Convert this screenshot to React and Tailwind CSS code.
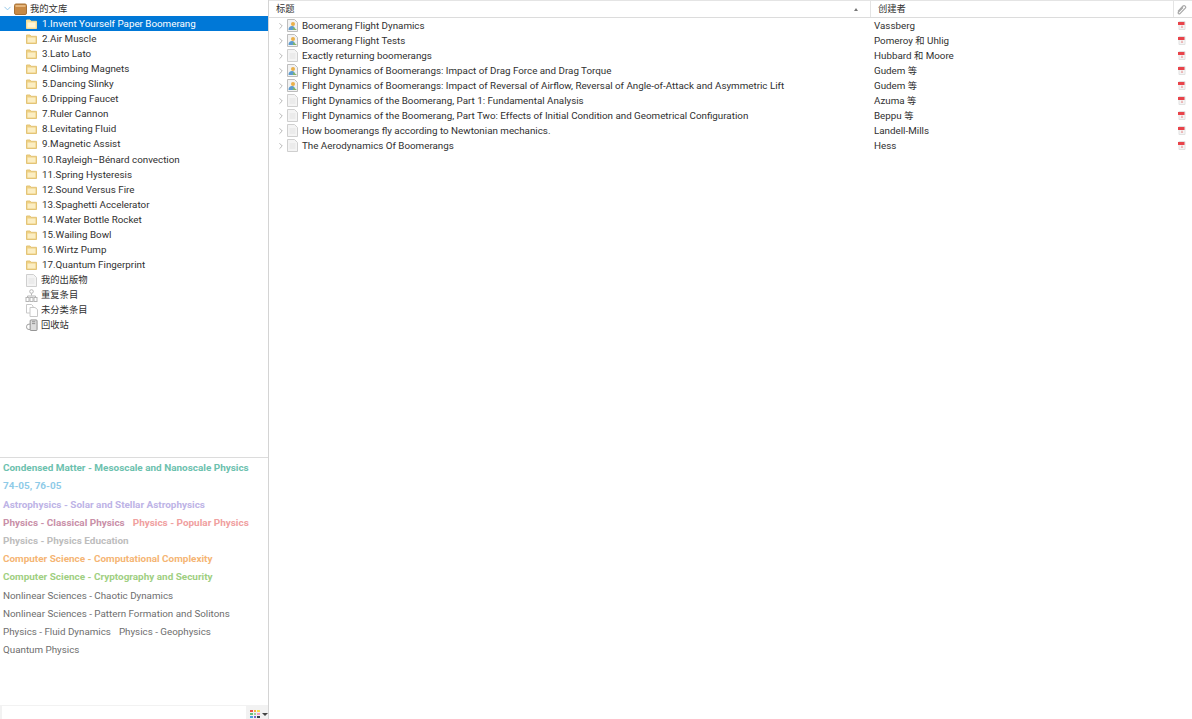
import React from 'react';
import { ChevronDown, ChevronRight } from 'lucide-react';

const FONT = "font-['Roboto','Noto_Sans_CJK_SC',sans-serif]";
const CJK = "font-['Noto_Sans_CJK_SC',sans-serif] text-[9.300px]";

const collections = [
  '1.Invent Yourself Paper Boomerang', '2.Air Muscle', '3.Lato Lato', '4.Climbing Magnets', '5.Dancing Slinky',
  '6.Dripping Faucet', '7.Ruler Cannon', '8.Levitating Fluid', '9.Magnetic Assist', '10.Rayleigh–Bénard convection',
  '11.Spring Hysteresis', '12.Sound Versus Fire', '13.Spaghetti Accelerator', '14.Water Bottle Rocket',
  '15.Wailing Bowl', '16.Wirtz Pump', '17.Quantum Fingerprint',
];

const items = [
  { title: 'Boomerang Flight Dynamics', creator: 'Vassberg', icon: 'person' },
  { title: 'Boomerang Flight Tests', creator: 'Pomeroy 和 Uhlig', icon: 'person' },
  { title: 'Exactly returning boomerangs', creator: 'Hubbard 和 Moore', icon: 'doc' },
  { title: 'Flight Dynamics of Boomerangs: Impact of Drag Force and Drag Torque', creator: 'Gudem 等', icon: 'person' },
  { title: 'Flight Dynamics of Boomerangs: Impact of Reversal of Airflow, Reversal of Angle-of-Attack and Asymmetric Lift', creator: 'Gudem 等', icon: 'person' },
  { title: 'Flight Dynamics of the Boomerang, Part 1: Fundamental Analysis', creator: 'Azuma 等', icon: 'doc' },
  { title: 'Flight Dynamics of the Boomerang, Part Two: Effects of Initial Condition and Geometrical Configuration', creator: 'Beppu 等', icon: 'doc' },
  { title: 'How boomerangs fly according to Newtonian mechanics.', creator: 'Landell-Mills', icon: 'doc' },
  { title: 'The Aerodynamics Of Boomerangs', creator: 'Hess', icon: 'doc' },
];

const tags = [
  [['Condensed Matter - Mesoscale and Nanoscale Physics', 'text-[#6cc1ae]']],
  [['74-05, 76-05', 'text-[#8fcbe8]']],
  [['Astrophysics - Solar and Stellar Astrophysics', 'text-[#bdb3e6]']],
  [['Physics - Classical Physics', 'text-[#c98fa8]'], ['Physics - Popular Physics', 'text-[#f0a0a0]']],
  [['Physics - Physics Education', 'text-[#bdbdbd]']],
  [['Computer Science - Computational Complexity', 'text-[#f5b574]']],
  [['Computer Science - Cryptography and Security', 'text-[#a0cf82]']],
];

const plainTags = [
  ['Nonlinear Sciences - Chaotic Dynamics'],
  ['Nonlinear Sciences - Pattern Formation and Solitons'],
  ['Physics - Fluid Dynamics', 'Physics - Geophysics'],
  ['Quantum Physics'],
];

const FolderIcon = ({ selected }) => (
  <svg width="11" height="10" viewBox="0 0 11 10" className="shrink-0">
    <path d="M0.500 1h3.500l1 1.300h5.500v7.200h-10z" fill={selected ? '#f8e3a0' : '#efd083'} stroke={selected ? '#f6dc96' : '#e3c477'} />
    <rect x="1.500" y="3.500" width="8" height="5" fill={selected ? '#fff6d6' : '#fbeec4'} />
  </svg>
);

const LibraryIcon = () => (
  <svg width="13" height="12" viewBox="0 0 13 12" className="shrink-0">
    <rect x="0.500" y="1" width="12" height="10.500" rx="1.500" fill="#c98a45" stroke="#a87236" />
    <rect x="1.500" y="2" width="10" height="2" fill="#e6b67c" />
  </svg>
);

const DocIcon = () => (
  <svg width="11" height="13" viewBox="0 0 11 13" className="shrink-0">
    <path d="M0.500 0.500h7l3 3v9h-10z" fill="#f4f4f4" stroke="#cfcfcf" />
    <path d="M2.500 5h6M2.500 7h6M2.500 9h6" stroke="#e2e2e2" />
  </svg>
);

const PersonDocIcon = () => (
  <svg width="11" height="13" viewBox="0 0 11 13" className="shrink-0">
    <path d="M0.500 0.500h7l3 3v9h-10z" fill="#f2f2f2" stroke="#bdbdbd" />
    <circle cx="6" cy="5" r="2" fill="#eab04a" />
    <path d="M1.500 11c0-3 1.500-4 3.500-4s3 1 3 4z" fill="#5d9bd0" />
    <path d="M6 8l4 3H6z" fill="#7fb56c" />
  </svg>
);

const DuplicateIcon = () => (
  <svg width="13" height="13" viewBox="0 0 13 13" className="shrink-0" fill="#fff" stroke="#b5b5b5">
    <circle cx="6.500" cy="2.500" r="1.800" />
    <path d="M6.500 4.500v2M2.500 8.500v-1.500h8v1.500" />
    <rect x="1" y="8.500" width="3" height="4" />
    <rect x="5" y="8.500" width="3" height="4" />
    <rect x="9" y="8.500" width="3" height="4" />
  </svg>
);

const UnfiledIcon = () => (
  <svg width="12" height="13" viewBox="0 0 12 13" className="shrink-0" fill="#fff" stroke="#c8c8c8">
    <path d="M0.500 0.500h5l1.500 1.500v7h-6.500z" />
    <path d="M4 3.500h5l2.500 2v7H4z" />
  </svg>
);

const TrashIcon = () => (
  <svg width="12" height="12" viewBox="0 0 13 13" className="shrink-0">
    <circle cx="3.500" cy="8.500" r="3" fill="#fff" stroke="#9a9a9a" />
    <rect x="4.500" y="1" width="7.500" height="11.500" rx="1" fill="#dcdcdc" stroke="#8a8a8a" />
    <path d="M6.500 3h3.500M6.500 5h3.500" stroke="#8a8a8a" />
  </svg>
);

const PdfIcon = () => (
  <svg width="8" height="9" viewBox="0 0 8 9" className="shrink-0">
    <path d="M1 0.500h6v8h-6z" fill="#f5f5f5" stroke="#e2e2e2" />
    <rect x="0" y="1" width="6.500" height="3" fill="#e8434a" />
    <path d="M4 4l-1.200 2.800h2.400z" fill="#e8a0a0" />
  </svg>
);

const PaperclipIcon = () => (
  <svg width="11" height="11" viewBox="0 0 11 11" fill="none" stroke="#a8a8a8" strokeWidth="1.200">
    <path d="M2 7.500l5-5.500a1.600 1.600 0 0 1 2.300 2.200L4 9.600a1 1 0 0 1-1.500-1.400L7 3.500" />
  </svg>
);

const ColorGridIcon = () => {
  const colors = ['#e8534a', '#f5b23d', '#f3df4e', '#6cc17a', '#9bd39b', '#f3a0c0', '#4aa3df', '#7a68c8', '#37474f'];
  return (
    <div className="grid grid-cols-3 gap-px">
      {colors.map((color, i) => (
        <span key={i} className="block w-[2.500px] h-[2px]" style={{ backgroundColor: color }} />
      ))}
    </div>
  );
};

const TreeRow = ({ icon, label, selected, cjk }) => (
  <div className={`h-[15.100px] flex items-center pl-[25px] text-[9.800px] ${selected ? 'bg-[#0078d7] text-white' : 'text-[#303030]'}`}>
    <span className="w-[13px] shrink-0 flex justify-center">{icon}</span>
    <span className={`whitespace-nowrap ${cjk ? `ml-[3px] ${CJK}` : 'ml-[4px] pt-px'}`}>{label}</span>
  </div>
);

// creator strings mix latin with a single cjk word
const Creator = ({ text }) => (
  <span className="w-[304px] shrink-0 whitespace-nowrap pt-px">
    {text.split(/([和等])/).map((part, i) =>
      part === '和' || part === '等' ? <span key={i} className={CJK}>{part}</span> : part
    )}
  </span>
);

export default function App() {
  return (
    <div className={`${FONT} w-[1192px] h-[719px] bg-white flex overflow-hidden`}>
      {/* Left side */}
      <div className="w-[269px] shrink-0 flex flex-col border-r border-[#d4d4d4]">
        <div className="h-[458px] shrink-0 border-b border-[#dcdcdc] pt-px">
          <div className="h-[15px] flex items-center text-[#303030]">
            <ChevronDown size={11} className="ml-[2px] text-[#8cc4e8] shrink-0" />
            <span className="ml-px"><LibraryIcon /></span>
            <span className={`ml-[3px] ${CJK}`}>我的文库</span>
          </div>
          {collections.map((name, i) => (
            <TreeRow key={name} icon={<FolderIcon selected={i === 0} />} label={name} selected={i === 0} />
          ))}
          <TreeRow icon={<DocIcon />} label="我的出版物" cjk />
          <TreeRow icon={<DuplicateIcon />} label="重复条目" cjk />
          <TreeRow icon={<UnfiledIcon />} label="未分类条目" cjk />
          <TreeRow icon={<TrashIcon />} label="回收站" cjk />
        </div>
        <div className="flex-1 pl-[3px] pt-[1.500px] text-[9.800px]">
          {tags.map((row, i) => (
            <div key={i} className="h-[18.200px] flex items-center gap-[8px] text-[9.950px] font-bold whitespace-nowrap">
              {row.map(([text, color]) => <span key={text} className={color}>{text}</span>)}
            </div>
          ))}
          {plainTags.map((row, i) => (
            <div key={i} className="h-[18.200px] flex items-center gap-[8px] text-[#6e6e6e] whitespace-nowrap">
              {row.map((text) => <span key={text}>{text}</span>)}
            </div>
          ))}
        </div>
        <div className="h-[14px] shrink-0 bg-[#f2f2f2] flex items-end pl-[2px]">
          <div className="w-[244px] h-[13px] bg-white" />
          <div className="flex items-center gap-[2px] ml-[4px] mb-[1px]">
            <ColorGridIcon />
            <span className="w-0 h-0 border-x-[3px] border-x-transparent border-t-[3px] border-t-[#444]" />
          </div>
        </div>
      </div>

      {/* Right side */}
      <div className="flex-1 flex flex-col min-w-0">
        <div className="h-[18px] shrink-0 flex items-center border-y border-t-[#e4e4e4] border-b-[#dcdcdc] text-[#303030]">
          <div className="w-[601px] shrink-0 flex items-center justify-between pl-[7px] pr-[12px] h-full">
            <span className={CJK}>标题</span>
            <span className="w-0 h-0 border-x-[2.500px] border-x-transparent border-b-[3px] border-b-[#777]" />
          </div>
          <div className={`w-[303px] shrink-0 h-full flex items-center pl-[7px] border-l border-[#e4e4e4] ${CJK}`}>创建者</div>
          <div className="flex-1 h-full flex items-center pl-[2px] border-l border-[#e4e4e4]">
            <PaperclipIcon />
          </div>
        </div>
        <div>
          {items.map((item) => (
            <div key={item.title} className="h-[15px] flex items-center text-[9.800px] text-[#303030]">
              <div className="w-[33px] shrink-0 flex items-center gap-[1px] pl-[7px]">
                <ChevronRight size={10} className="text-[#a8a8a8] shrink-0" />
                {item.icon === 'person' ? <PersonDocIcon /> : <DocIcon />}
              </div>
              <span className="w-[572px] shrink-0 whitespace-nowrap pt-px">{item.title}</span>
              <Creator text={item.creator} />
              <PdfIcon />
            </div>
          ))}
        </div>
      </div>
    </div>
  );
}
